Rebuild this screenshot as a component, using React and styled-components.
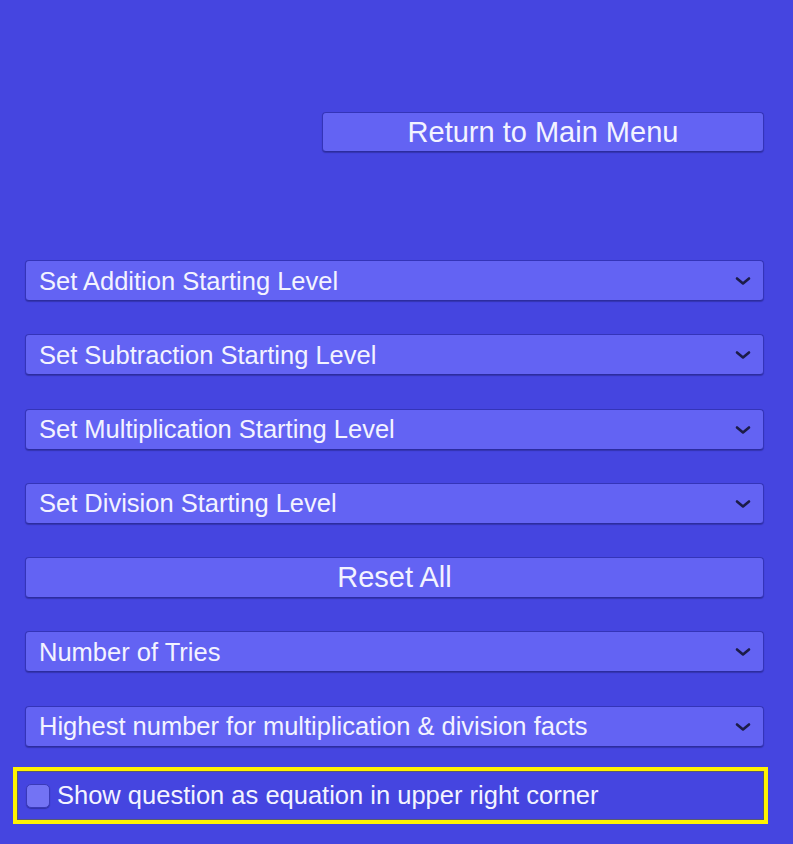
import React, {useState} from "react";
import styled, {createGlobalStyle} from "styled-components";

const GlobalStyle = createGlobalStyle`
  html, body {
    margin: 0;
    padding: 0;
    background: #4545e0;
  }
  body {
    font-family: "Liberation Sans", Arial, sans-serif;
  }
`

const Page = styled.div`
  width: 793px;
  height: 844px;
  box-sizing: border-box;
  background: #4545e0;
  padding: 112px 29px 0 25px;
  display: flex;
  flex-direction: column;
  overflow: hidden;
  font-family: "Liberation Sans", Arial, sans-serif;
`

const TopRow = styled.div`
  display: flex;
  justify-content: flex-end;
  margin-bottom: 108px;
`

const Button = styled.button`
  box-sizing: border-box;
  width: ${props => props.width || "100%"};
  height: ${props => props.height || 41}px;
  background: #6363f3;
  border: 1px solid #3434b8;
  border-bottom-color: #2c2ca0;
  border-radius: 4px;
  box-shadow: 0 1px 1px rgba(20, 20, 90, 0.35);
  color: #f3f3ff;
  font-family: "Liberation Sans", Arial, sans-serif;
  font-size: 29px;
  padding: 0;
  display: flex;
  align-items: center;
  justify-content: center;
  cursor: pointer;
`

const List = styled.div`
  display: flex;
  flex-direction: column;
  gap: 33.3px;
`

const Select = styled.div`
  box-sizing: border-box;
  height: 41px;
  background: #6363f3;
  border: 1px solid #3434b8;
  border-bottom-color: #2c2ca0;
  border-radius: 4px;
  box-shadow: 0 1px 1px rgba(20, 20, 90, 0.35);
  display: flex;
  align-items: center;
  justify-content: space-between;
  padding: 1px 12px 0 13px;
  color: #f3f3ff;
  font-size: 25.5px;
  cursor: pointer;
`

const Label = styled.span`
  white-space: nowrap;
`

const Chevron = styled.svg`
  width: 16px;
  height: 10px;
  flex-shrink: 0;
`

const Highlight = styled.label`
  box-sizing: border-box;
  margin: 20px -4px 0 -12px;
  height: 57px;
  border: 4px solid #fff200;
  box-shadow: inset 0 0 0 1px #5a5a70;
  display: flex;
  align-items: center;
  gap: 7px;
  padding: 1px 0 0 9px;
  color: #f3f3ff;
  font-size: 25.5px;
  cursor: pointer;
`

const Box = styled.span`
  box-sizing: border-box;
  width: 24px;
  height: 24px;
  border-radius: 5px;
  background: ${props => props.checked ? "#9a9aff" : "#7373f4"};
  border: 1px solid #3a3ab8;
  box-shadow: 0 1px 1px rgba(20, 20, 90, 0.4);
  flex-shrink: 0;
`

const selects = [
    "Set Addition Starting Level",
    "Set Subtraction Starting Level",
    "Set Multiplication Starting Level",
    "Set Division Starting Level",
];

const DropDown = ({label}) => (
    <Select>
        <Label>{label}</Label>
        <Chevron viewBox="0 0 16 10">
            <path d="M2 2.5 L8 7.5 L14 2.5" fill="none" stroke="#1c1c48" strokeWidth="2.6"
                  strokeLinecap="round" strokeLinejoin="round"/>
        </Chevron>
    </Select>
)

export default function App() {
    const [checked, setChecked] = useState(false);

    return (
        <Page>
            <GlobalStyle/>
            <TopRow>
                <Button width="442px" height={40}>Return to Main Menu</Button>
            </TopRow>

            <List>
                {selects.map(s => <DropDown key={s} label={s}/>)}
                <Button>Reset All</Button>
                <DropDown label="Number of Tries"/>
                <DropDown label="Highest number for multiplication & division facts"/>
            </List>

            <Highlight onClick={() => setChecked(!checked)}>
                <Box checked={checked}/>
                Show question as equation in upper right corner
            </Highlight>
        </Page>
    );
}
